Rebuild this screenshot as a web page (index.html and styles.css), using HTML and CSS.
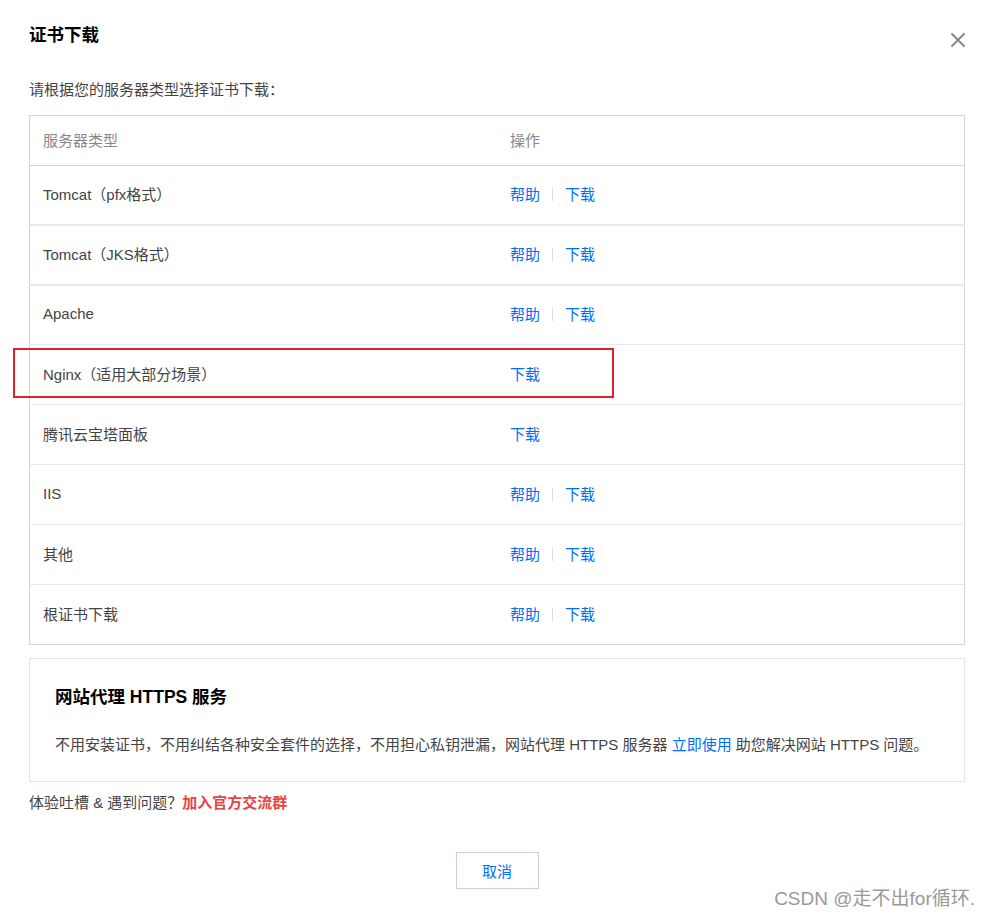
FILE: index.html
```html
<!DOCTYPE html>
<html lang="zh-CN">
<head>
<meta charset="utf-8">
<title>证书下载</title>
<link rel="stylesheet" href="styles.css">
</head>
<body>
<div class="dialog">
  <div class="dlg-head">
    <h3 class="dlg-title">证书下载</h3>
    <span class="dlg-close" aria-label="关闭">
      <svg width="16" height="16" viewBox="0 0 16 16"><path d="M1.5 1.5 L14.5 14.5 M14.5 1.5 L1.5 14.5" stroke="#888" stroke-width="2" fill="none"/></svg>
    </span>
  </div>
  <p class="intro">请根据您的服务器类型选择证书下载：</p>
  <table class="cert-table">
    <thead>
      <tr><th>服务器类型</th><th>操作</th></tr>
    </thead>
    <tbody>
      <tr class="thick first"><td>Tomcat（pfx格式）</td><td><a class="lnk">帮助</a><span class="sep"></span><a class="lnk">下载</a></td></tr>
      <tr class="thick"><td>Tomcat（JKS格式）</td><td><a class="lnk">帮助</a><span class="sep"></span><a class="lnk">下载</a></td></tr>
      <tr><td>Apache</td><td><a class="lnk">帮助</a><span class="sep"></span><a class="lnk">下载</a></td></tr>
      <tr><td>Nginx（适用大部分场景）</td><td><a class="lnk">下载</a></td></tr>
      <tr><td>腾讯云宝塔面板</td><td><a class="lnk">下载</a></td></tr>
      <tr><td>IIS</td><td><a class="lnk">帮助</a><span class="sep"></span><a class="lnk">下载</a></td></tr>
      <tr><td>其他</td><td><a class="lnk">帮助</a><span class="sep"></span><a class="lnk">下载</a></td></tr>
      <tr class="last"><td>根证书下载</td><td><a class="lnk">帮助</a><span class="sep"></span><a class="lnk">下载</a></td></tr>
    </tbody>
  </table>
  <div class="proxy">
    <h4 class="proxy-title">网站代理 HTTPS 服务</h4>
    <p class="proxy-text">不用安装证书，不用纠结各种安全套件的选择，不用担心私钥泄漏，网站代理 HTTPS 服务器 <a class="lnk">立即使用</a> 助您解决网站 HTTPS 问题。</p>
  </div>
  <p class="feedback">体验吐槽 &amp; 遇到问题？<a class="red-link">加入官方交流群</a></p>
  <div class="foot">
    <button class="btn">取消</button>
  </div>
  <div class="highlight"></div>
</div>
<div class="watermark">CSDN @走不出for循环.</div>
</body>
</html>
```
FILE: styles.css
```css
* { box-sizing: border-box; }
html, body {
  margin: 0;
  padding: 0;
  background: #fff;
}
body {
  font-family: "Liberation Sans", "Noto Sans CJK SC", sans-serif;
  font-size: 15px;
  color: #444;
  position: relative;
  height: 915px;
  overflow: hidden;
}
.dialog {
  position: relative;
  padding: 20px 24px 0 29px;
}
.dlg-head {
  display: flex;
  justify-content: space-between;
  align-items: center;
  height: 30px;
}
.dlg-title {
  margin: 0;
  font-size: 17.5px;
  font-weight: bold;
  color: #000;
  line-height: 30px;
}
.dlg-close {
  display: flex;
  margin-right: -1px;
  margin-top: 9px;
}
.intro {
  margin: 30px 0 0;
  line-height: 20px;
  color: #444;
}
.cert-table {
  margin-top: 15px;
  width: 100%;
  border-collapse: collapse;
  border: 1px solid #cfd5de;
  table-layout: fixed;
}
.cert-table th {
  height: 50px;
  text-align: left;
  font-weight: normal;
  color: #888;
  padding: 0 13px 2px;
  border-bottom: 1px solid #cfd5de;
}
.cert-table td {
  height: 60px;
  padding: 0 13px 2px;
  border-bottom: 1px solid #e5e8ed;
  color: #444;
}
.cert-table tr.thick td {
  border-bottom: 2px solid #e5e8ed;
}
.cert-table tr.thick.first td {
  height: 59px;
}
.cert-table tr.last td {
  border-bottom: 1px solid #cfd5de;
}
.lnk {
  color: #006eff;
  text-decoration: none;
  cursor: pointer;
}
.sep {
  display: inline-block;
  width: 1px;
  height: 13px;
  background: #dcdcdc;
  margin: 0 12px;
  vertical-align: -1px;
}
.proxy {
  margin-top: 13px;
  border: 1px solid #e5e5e5;
  padding: 26px 25px 26px 25px;
}
.proxy-title {
  margin: 0;
  font-size: 17.5px;
  font-weight: bold;
  color: #000;
  line-height: 24px;
}
.proxy-text {
  margin: 26px 0 0;
  line-height: 20px;
  color: #444;
}
.feedback {
  margin: 11px 0 0;
  line-height: 20px;
  color: #444;
}
.red-link {
  color: #e54545;
  font-weight: bold;
  cursor: pointer;
}
.foot {
  display: flex;
  justify-content: center;
  margin-top: 39px;
}
.btn {
  width: 83px;
  height: 37px;
  background: #fff;
  border: 1px solid #c5d0e0;
  color: #006eff;
  font-family: inherit;
  font-size: 15px;
  padding: 0;
  cursor: pointer;
}
.highlight {
  position: absolute;
  left: 13px;
  top: 348px;
  width: 601px;
  height: 50px;
  border: 2px solid #e0202a;
  pointer-events: none;
}
.watermark {
  position: absolute;
  right: 14px;
  bottom: 4px;
  font-size: 19px;
  color: #999;
  line-height: 24px;
}
```
